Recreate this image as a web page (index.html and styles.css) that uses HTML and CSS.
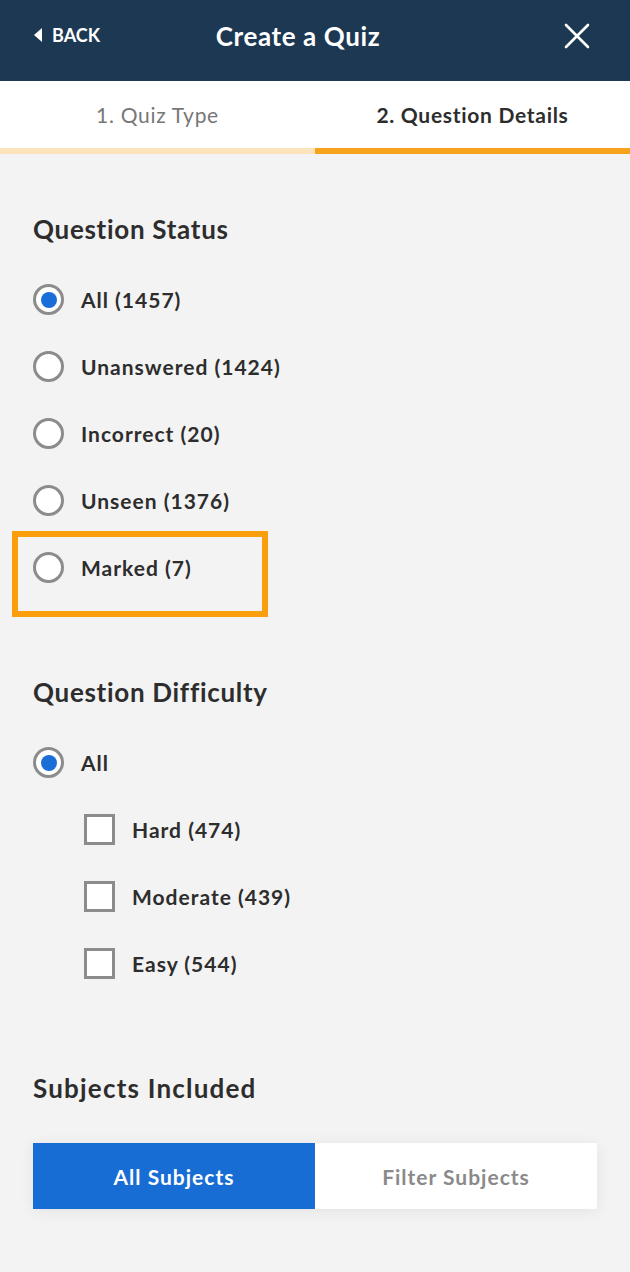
FILE: index.html
```html
<!DOCTYPE html>
<html lang="en">
<head>
    <meta charset="UTF-8">
    <meta name="viewport" content="width=device-width, initial-scale=1.0">
    <title>Create a Quiz</title>
    <link rel="stylesheet" href="styles.css">
</head>
<body>
    <header class="top-bar">
        <a class="back-link" href="#">
            <span class="back-arrow"></span>
            BACK
        </a>
        <h1 class="title">Create a Quiz</h1>
        <button class="close-btn" aria-label="Close">
            <svg width="26" height="26" viewBox="0 0 26 26">
                <path d="M2 2 L24 24 M24 2 L2 24" stroke="#fff" stroke-width="2.6" stroke-linecap="round" fill="none"/>
            </svg>
        </button>
    </header>

    <nav class="steps">
        <div class="step done">1. Quiz Type</div>
        <div class="step active">2. Question Details</div>
    </nav>

    <main class="content">
        <section class="group">
            <h2 class="group-title">Question Status</h2>
            <ul class="options">
                <li class="option"><span class="radio checked"></span>All (1457)</li>
                <li class="option"><span class="radio"></span>Unanswered (1424)</li>
                <li class="option"><span class="radio"></span>Incorrect (20)</li>
                <li class="option"><span class="radio"></span>Unseen (1376)</li>
                <li class="option highlighted"><span class="radio"></span>Marked (7)</li>
            </ul>
        </section>

        <section class="group">
            <h2 class="group-title">Question Difficulty</h2>
            <ul class="options">
                <li class="option"><span class="radio checked"></span>All</li>
                <li class="option sub"><span class="checkbox"></span>Hard (474)</li>
                <li class="option sub"><span class="checkbox"></span>Moderate (439)</li>
                <li class="option sub"><span class="checkbox"></span>Easy (544)</li>
            </ul>
        </section>

        <section class="group">
            <h2 class="group-title wide">Subjects Included</h2>
            <div class="segmented">
                <button class="segment selected">All Subjects</button>
                <button class="segment">Filter Subjects</button>
            </div>
        </section>
    </main>
</body>
</html>
```

FILE: styles.css
```css
* {
    margin: 0;
    padding: 0;
    box-sizing: border-box;
}

body {
    background-color: #f3f3f3;
    font-family: 'Lato', 'Liberation Sans', sans-serif;
    color: #2d2d2d;
    width: 630px;
    min-height: 1272px;
}

/* Header */
.top-bar {
    height: 81px;
    background-color: #1c3853;
    display: flex;
    align-items: center;
    padding: 0 40px 0 34px;
    color: #fff;
}

.back-link {
    display: flex;
    align-items: center;
    gap: 10px;
    color: #fff;
    text-decoration: none;
    font-size: 18px;
    font-weight: bold;
    width: 120px;
    margin-top: -12px;
}

.back-arrow {
    width: 0;
    height: 0;
    border-top: 7px solid transparent;
    border-bottom: 7px solid transparent;
    border-right: 8px solid #fff;
}

.title {
    flex: 1;
    text-align: center;
    font-size: 26px;
    font-weight: bold;
    letter-spacing: 0.6px;
    margin-right: 122px;
    margin-top: -10px;
}

.close-btn {
    background: none;
    border: none;
    display: flex;
    margin-top: -10px;
}

/* Steps */
.steps {
    display: flex;
    background-color: #fff;
}

.step {
    flex: 1;
    height: 73px;
    display: flex;
    align-items: center;
    justify-content: center;
    font-size: 21px;
    letter-spacing: 0.7px;
    border-bottom: 6px solid #fde3bb;
}

.step.done {
    color: #777;
}

.step.active {
    font-weight: bold;
    color: #2d2d2d;
    border-bottom-color: #f7a21b;
}

/* Content */
.content {
    padding: 0 33px;
}

.group {
    margin-top: 60px;
}

.group + .group {
    margin-top: 76px;
}

.group-title {
    font-size: 26px;
    line-height: 30px;
    font-weight: bold;
    letter-spacing: 0.7px;
    color: #2d2d2d;
}

.group-title.wide {
    letter-spacing: 1.2px;
}

.options {
    list-style: none;
    margin-top: 22px;
}

.option {
    position: relative;
    height: 67px;
    display: flex;
    align-items: center;
    gap: 17px;
    font-size: 21px;
    font-weight: bold;
    letter-spacing: 1px;
}

.option.sub {
    padding-left: 51px;
}

.radio {
    width: 31px;
    height: 31px;
    border-radius: 50%;
    border: 3px solid #8c8c8c;
    background-color: #fff;
    display: flex;
    align-items: center;
    justify-content: center;
    flex-shrink: 0;
}

.radio.checked::after {
    content: '';
    width: 16px;
    height: 16px;
    border-radius: 50%;
    background-color: #1a6ed8;
}

.checkbox {
    width: 31px;
    height: 31px;
    border: 3px solid #8c8c8c;
    background-color: #fff;
    flex-shrink: 0;
}

/* annotation box drawn over the row */
.option.highlighted::before {
    content: '';
    position: absolute;
    box-sizing: border-box;
    left: -21px;
    top: -3px;
    width: 256px;
    height: 86px;
    border: 6px solid #fa9e0c;
    pointer-events: none;
}

/* Segmented control */
.segmented {
    display: flex;
    margin-top: 40px;
    width: 564px;
    box-shadow: 0 2px 14px rgba(0, 0, 0, 0.07);
}

.segment {
    flex: 1;
    height: 66px;
    border: none;
    font-family: inherit;
    font-size: 21px;
    font-weight: bold;
    letter-spacing: 1px;
    background-color: #fff;
    color: #8a8a8a;
}

.segment.selected {
    background-color: #186dd4;
    color: #fff;
}
```
